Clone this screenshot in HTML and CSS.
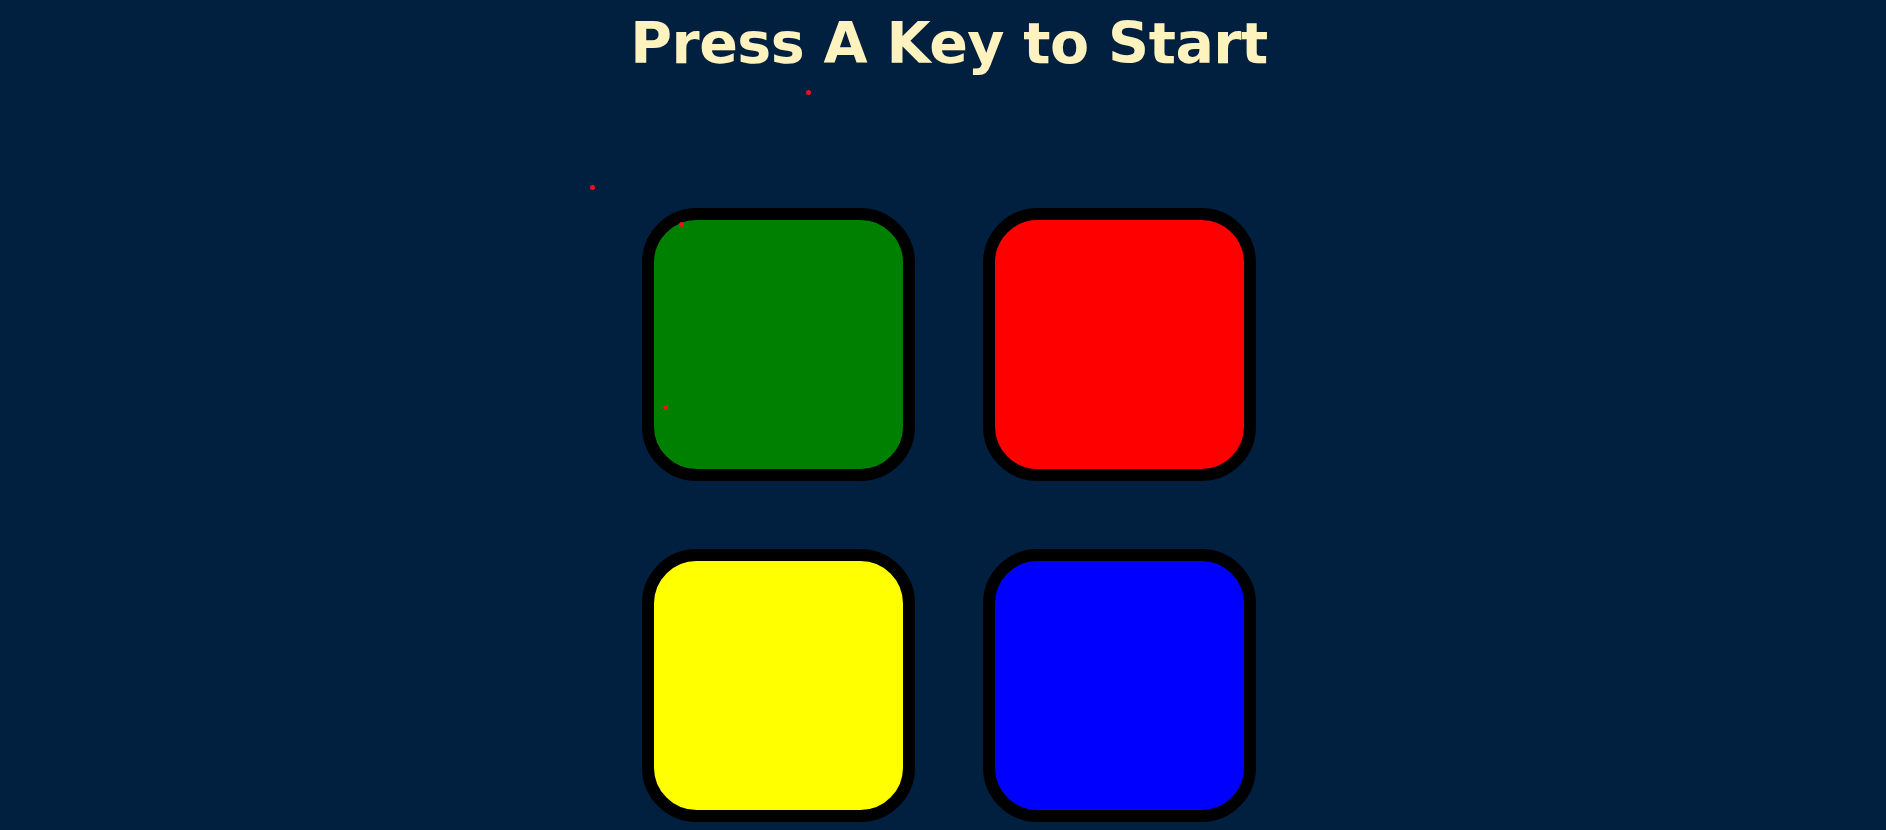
FILE: index.html
```html
<!DOCTYPE html>
<html lang="en">
<head>
    <meta charset="UTF-8">
    <meta name="viewport" content="width=device-width, initial-scale=1.0">
    <title>Simon Game</title>
    <link rel="stylesheet" href="styles.css">
</head>
<body>
    <!-- 제목 -->
    <h1 class="level-title">Press A Key to Start</h1>

    <!-- 버튼 4개 -->
    <div class="container">
        <div class="btn green"></div>
        <div class="btn red"></div>
        <div class="btn yellow"></div>
        <div class="btn blue"></div>
    </div>

    <!-- 화면에 남은 빨간 점들 -->
    <span class="dot" style="left:806px;top:90px"></span>
    <span class="dot" style="left:590px;top:185px"></span>
    <span class="dot" style="left:679px;top:222px"></span>
    <span class="dot" style="left:663px;top:405px"></span>
</body>
</html>
```

FILE: styles.css
```css
/* 변수 */
:root{
    --bsz: 273px;
    --gap: 68px;
}
body{
    margin: 0;
    padding-left: 12px;
    background-color: #011F3F;
    text-align: center;
    overflow: hidden;
}
.level-title{
    margin: 0;
    padding-top: 3px;
    font-family: "Comic Sans MS", "DejaVu Sans", sans-serif;
    font-weight: bold;
    font-size: 57px;
    letter-spacing: -0.5px;
    line-height: 80px;
    color: #FEF2BF;
}
.container{
    display: grid;
    grid-template-columns: var(--bsz) var(--bsz);
    justify-content: center;
    gap: var(--gap);
    margin-top: 125px;
}
.btn{
    box-sizing: border-box;
    width: var(--bsz);
    height: var(--bsz);
    border: 12px solid #000;
    border-radius: 20%;
}
.green{ background-color: green; }
.red{ background-color: red; }
.yellow{ background-color: yellow; }
.blue{ background-color: blue; }

.dot{
    position: absolute;
    width: 5px;
    height: 5px;
    border-radius: 50%;
    background-color: #e8141a;
}
```
